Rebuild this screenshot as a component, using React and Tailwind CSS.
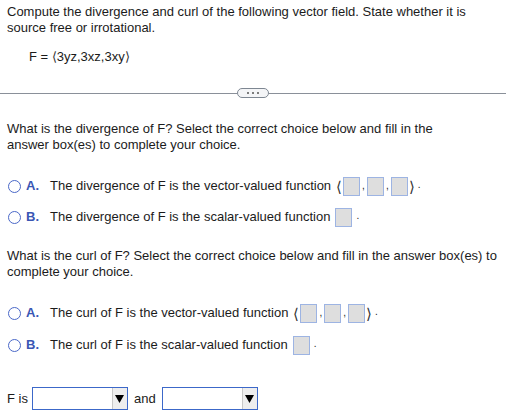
import React from 'react';

const Box = () => (
  <span className="inline-block w-[17px] h-[19px] bg-[#dedede] border border-[#9db4e3] align-middle" />
);

const Vec = () => (
  <span className="inline-flex items-center ml-[5px]">
    <span className="text-[15px] leading-none text-[#333] mr-[1px]">⟨</span>
    <Box />
    <span className="text-[10px] mx-[2px] self-end mb-[2px]">,</span>
    <Box />
    <span className="text-[10px] mx-[2px] self-end mb-[2px]">,</span>
    <Box />
    <span className="text-[15px] leading-none text-[#333] ml-[1px]">⟩</span>
    <span className="ml-[3px] text-[10px] self-end mb-[3px]">.</span>
  </span>
);

const Scalar = () => (
  <span className="inline-flex items-center ml-[5px]">
    <Box />
    <span className="ml-[4px] text-[10px] self-end mb-[3px]">.</span>
  </span>
);

const Option = ({ letter, children, className }) => (
  <div className={`flex items-center h-[20px] ${className}`}>
    <span className="w-[13px] h-[13px] rounded-full border border-[#4a68c8] ml-[1px] shrink-0" />
    <span className="ml-[5px] w-[24px] font-bold text-[#3a56b4]">{letter}</span>
    <span className="flex items-center">{children}</span>
  </div>
);

const Select = () => (
  <div className="w-[96px] h-[23px] border border-[#3c68c9] bg-white flex justify-end">
    <div className="w-[15px] h-full bg-[#eeeeee] border-l border-[#c8c8c8] flex items-center justify-center">
      <svg width="9" height="9" viewBox="0 0 9 9">
        <polygon points="0,1 9,1 4.5,9" fill="#000" />
      </svg>
    </div>
  </div>
);

export default function App() {
  return (
    <div
      className="w-[506px] h-[411px] bg-white text-[#1b1b1b] text-[13px] leading-[16px] overflow-hidden"
      style={{ fontFamily: '"Liberation Sans", Arial, sans-serif' }}
    >
      <div className="pl-[7px] pr-[7px] pt-[4px]">
        <p>Compute the divergence and curl of the following vector field. State whether it is source free or irrotational.</p>
        <p className="mt-[13px] pl-[22px]">
          F = <span className="text-[#333]">⟨</span>3yz,3xz,3xy<span className="text-[#333]">⟩</span>
        </p>
      </div>

      <div className="mt-[22px] h-[12px] flex items-center">
        <div className="flex-1 h-px bg-[#8a9099]" />
        <div className="w-[32px] h-[10px] rounded-full border border-[#7e8792] bg-[#f4f5f7] flex items-center justify-center gap-[3px]">
          <span className="w-[2px] h-[2px] rounded-full bg-[#555]" />
          <span className="w-[2px] h-[2px] rounded-full bg-[#555]" />
          <span className="w-[2px] h-[2px] rounded-full bg-[#555]" />
        </div>
        <div className="flex-1 h-px bg-[#8a9099]" />
      </div>

      <div className="pl-[7px] pr-[7px]">
        <p className="mt-[22px] pr-[60px]">What is the divergence of F? Select the correct choice below and fill in the answer box(es) to complete your choice.</p>
        <Option letter="A." className="mt-[23px]">
          The divergence of F is the vector-valued function
          <Vec />
        </Option>
        <Option letter="B." className="mt-[11px]">
          The divergence of F is the scalar-valued function
          <Scalar />
        </Option>

        <p className="mt-[21px]">What is the curl of F? Select the correct choice below and fill in the answer box(es) to complete your choice.</p>
        <Option letter="A." className="mt-[23px]">
          The curl of F is the vector-valued function
          <Vec />
        </Option>
        <Option letter="B." className="mt-[12px]">
          The curl of F is the scalar-valued function
          <Scalar />
        </Option>

        <div className="mt-[32px] flex items-center">
          <span className="mr-[4px]">F is</span>
          <Select />
          <span className="mx-[6px]">and</span>
          <Select />
        </div>
      </div>
    </div>
  );
}
